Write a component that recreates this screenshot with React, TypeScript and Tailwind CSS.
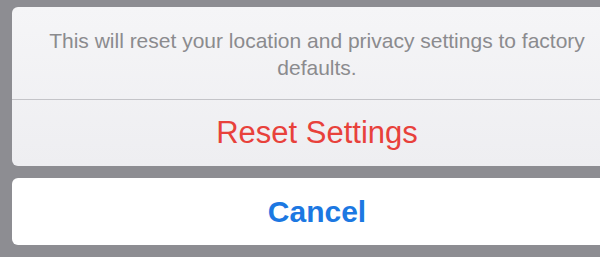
import React from 'react';

const font = { fontFamily: '"Liberation Sans", Arial, Helvetica, sans-serif' };

export default function App() {
    return (
        <div className="w-[600px] h-[257px] overflow-hidden bg-[#8d8d92] pl-3 pt-[7px] flex flex-col gap-3" style={font}>
            <div className="w-[610px] shrink-0 rounded-[6px] bg-gradient-to-b from-[#f5f5f7] to-[#eeeef1] flex flex-col">
                <div className="h-[92px] flex items-center justify-center text-center text-[21px] leading-[27px] text-[#8b8b8e] pt-[2px]">
                    <p>
                        This will reset your location and privacy settings to factory
                        <br />
                        defaults.
                    </p>
                </div>
                <div className="h-px bg-[#c4c4c8]" />
                <div className="h-[66px] flex items-center justify-center text-[31px] text-[#e8413b]">
                    Reset Settings
                </div>
            </div>
            <div className="w-[610px] h-[67px] shrink-0 rounded-[6px] bg-white flex items-center justify-center text-[30px] font-bold text-[#1c78e2]">
                Cancel
            </div>
        </div>
    );
}
